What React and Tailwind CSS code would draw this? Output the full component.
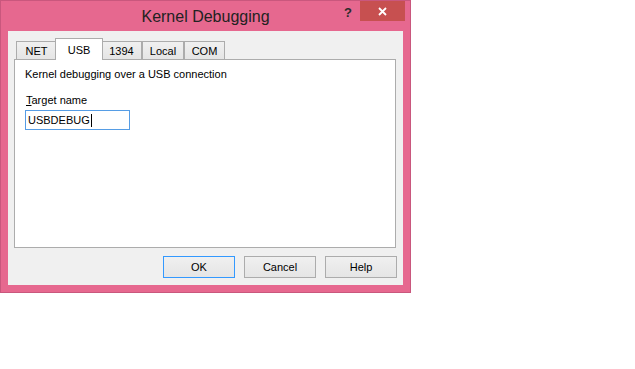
import React from "react";

const font = { fontFamily: '"Liberation Sans", Arial, sans-serif' };

function Tab({ label, selected }) {
  if (selected) {
    return (
      <div className="relative z-10 -mx-[2px] -mb-px flex h-[22px] w-[48px] items-start justify-center border border-b-0 border-[#acacac] bg-white pt-[3px] text-[11px] text-black">
        {label}
      </div>
    );
  }
  return (
    <div className="-ml-px flex h-[18px] items-center justify-center border border-b-0 border-[#acacac] bg-gradient-to-b from-[#f0f0f0] to-[#e5e5e5] pt-px text-[11px] text-black first:ml-0">
      {label}
    </div>
  );
}

function Button({ children, primary }) {
  return (
    <button
      className={
        "h-[22px] w-[72px] border bg-gradient-to-b from-[#f0f0f0] to-[#e5e5e5] text-[11px] text-black " +
        (primary ? "border-[#3399ff]" : "border-[#acacac]")
      }
    >
      {children}
    </button>
  );
}

export default function App() {
  return (
    <div className="h-[369px] w-[635px] bg-white" style={font}>
      <div className="flex h-[293px] w-[411px] flex-col border border-[#c9577d] bg-[#e6688f]">
        {/* title bar */}
        <div className="relative flex h-[30px] items-center justify-center">
          <span className="pt-[1px] text-[16px] text-[#222]">Kernel Debugging</span>
          <span className="absolute left-[343px] top-[2px] text-[13px] font-bold text-[#2b2b2b]">?</span>
          <div className="absolute right-[5px] top-0 flex h-[20px] w-[45px] items-center justify-center bg-[#c75050]">
            <svg width="9" height="9" viewBox="0 0 9 9">
              <path d="M1 1 L8 8 M8 1 L1 8" stroke="#fff" strokeWidth="1.8" />
            </svg>
          </div>
        </div>

        {/* client area */}
        <div className="mx-[7px] mb-[7px] flex flex-1 flex-col bg-[#f0f0f0] pl-[6px] pr-[7px] pt-[7px]">
          <div className="flex h-[21px] items-end pl-[2px]">
            <div className="w-[41px]"><Tab label="NET" /></div>
            <Tab label="USB" selected />
            <div className="w-[41px]"><Tab label="1394" /></div>
            <div className="w-[42px]"><Tab label="Local" /></div>
            <div className="w-[41px]"><Tab label="COM" /></div>
          </div>

          <div className="h-[189px] border border-[#acacac] bg-white px-[10px] pt-[8px] text-[11px] text-black">
            <p className="leading-[13px]">Kernel debugging over a USB connection</p>
            <p className="mt-[13px] pl-px leading-[13px]">
              <span className="underline">T</span>arget name
            </p>
            <div className="mt-[3px] flex h-[20px] w-[105px] items-center border border-[#569de5] bg-white pl-[2px] text-[11px]">
              <span>USBDEBUG</span>
              <span className="ml-px h-[13px] w-px bg-black" />
            </div>
          </div>

          <div className="mt-[8px] -mr-px flex justify-end gap-[9px]">
            <Button primary>OK</Button>
            <Button>Cancel</Button>
            <Button>Help</Button>
          </div>
        </div>
      </div>
    </div>
  );
}
